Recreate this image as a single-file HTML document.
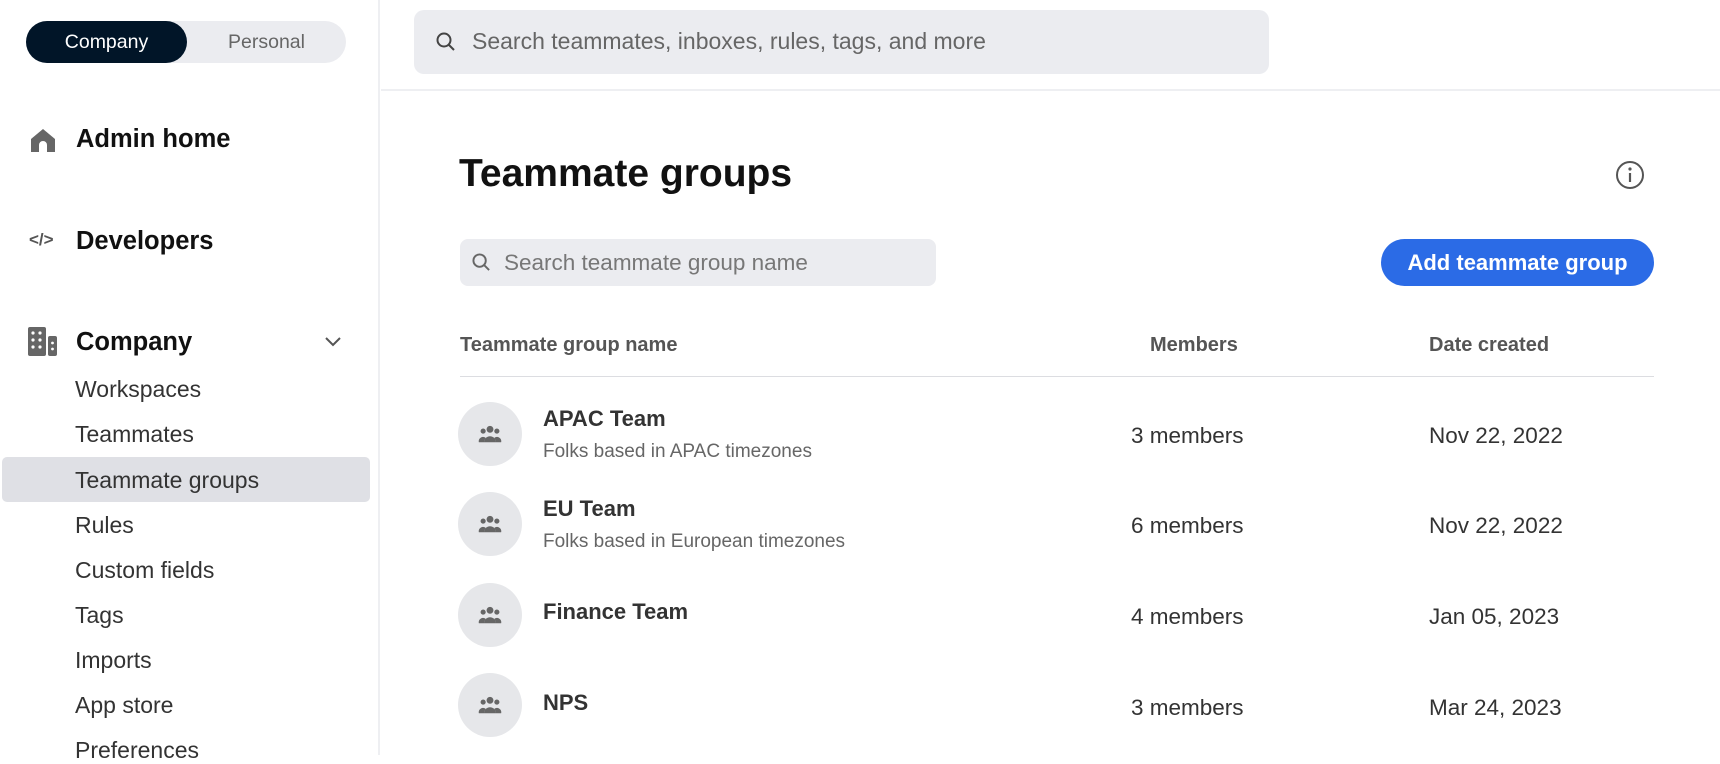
<!DOCTYPE html>
<html><head><meta charset="utf-8"><style>
*{box-sizing:border-box;margin:0;padding:0}
body{width:1720px;height:755px;overflow:hidden;background:#fff;font-family:"Liberation Sans",sans-serif;color:#1a1a1a;position:relative}
.a{position:absolute;white-space:nowrap}
.side{position:absolute;left:0;top:0;width:380px;height:755px;border-right:2px solid #eeeff2}
.tog{left:26px;top:21px;width:320px;height:42px;border-radius:21px;background:#ebecf0}
.tog .on{position:absolute;left:0;top:0;width:161px;height:42px;border-radius:21px;background:#011528;color:#fff;font-size:19.5px;text-align:center;line-height:42px}
.tog .off{position:absolute;left:161px;top:0;width:159px;height:42px;color:#666;font-size:19.5px;text-align:center;line-height:42px}
.h{font-size:25.5px;font-weight:bold;color:#111}
.sub{font-size:23px;color:#333;left:75px}
.muted{color:#666}
.av{position:absolute;left:458px;width:64px;height:64px;border-radius:50%;background:#e6e7ea;display:flex;align-items:center;justify-content:center}
.nm{font-size:22px;font-weight:bold;color:#333;left:543px}
.ds{font-size:19px;color:#666;left:543px}
.mb{font-size:22.5px;color:#333;left:1131px}
.dt{font-size:22.5px;color:#333;left:1429px}
</style></head><body>
<div class="side">
 <div class="a tog"><div class="on">Company</div><div class="off">Personal</div></div>
 <svg class="a" style="left:30px;top:128px" width="26" height="24" viewBox="0 0 26 24"><path d="M13 1 L25 11 V24 H17 V17 a4 4 0 0 0 -8 0 V24 H1 V11 Z" fill="#666"/></svg>
 <div class="a h" style="left:76px;top:125px">Admin home</div>
 <div class="a" style="left:29px;top:230px;font-size:17px;color:#555;font-weight:bold">&lt;/&gt;</div>
 <div class="a h" style="left:76px;top:227px">Developers</div>
 <svg class="a" style="left:28px;top:327px" width="30" height="30" viewBox="0 0 30 30"><rect x="0" y="0" width="18" height="29" rx="2" fill="#666"/><rect x="20" y="9" width="9" height="20" rx="2" fill="#666"/><g fill="#fff"><circle cx="5" cy="6" r="1.6"/><circle cx="12" cy="6" r="1.6"/><circle cx="5" cy="13" r="1.6"/><circle cx="12" cy="13" r="1.6"/><circle cx="5" cy="20" r="1.6"/><circle cx="12" cy="20" r="1.6"/><circle cx="24.5" cy="16" r="1.4"/><circle cx="24.5" cy="22" r="1.4"/></g></svg>
 <div class="a h" style="left:76px;top:328px">Company</div>
 <svg class="a" style="left:325px;top:337px" width="16" height="10" viewBox="0 0 16 10"><path d="M1 1 L8 8 L15 1" stroke="#555" stroke-width="2" fill="none"/></svg>
 <div class="a" style="left:2px;top:457px;width:368px;height:45px;background:#dfe0e5;border-radius:5px"></div>
 <div class="a sub" style="top:376px">Workspaces</div>
 <div class="a sub" style="top:421px">Teammates</div>
 <div class="a sub" style="top:467px">Teammate groups</div>
 <div class="a sub" style="top:512px">Rules</div>
 <div class="a sub" style="top:557px">Custom fields</div>
 <div class="a sub" style="top:602px">Tags</div>
 <div class="a sub" style="top:647px">Imports</div>
 <div class="a sub" style="top:692px">App store</div>
 <div class="a sub" style="top:737px">Preferences</div>
</div>
<div class="a" style="left:381px;top:89px;width:1339px;height:2px;background:#eeeff2"></div>
<div class="a" style="left:414px;top:10px;width:855px;height:64px;background:#ebecf0;border-radius:10px"></div>
<svg class="a" style="left:436px;top:32px" width="20" height="20" viewBox="0 0 20 20"><circle cx="8" cy="8" r="6.5" stroke="#444" stroke-width="2" fill="none"/><path d="M13 13 L18 18" stroke="#444" stroke-width="2"/></svg>
<div class="a muted" style="left:472px;top:28px;font-size:23px">Search teammates, inboxes, rules, tags, and more</div>
<div class="a" style="left:459px;top:152px;font-size:39px;font-weight:bold;color:#111">Teammate groups</div>
<svg class="a" style="left:1615px;top:160px" width="30" height="30" viewBox="0 0 30 30"><circle cx="15" cy="15" r="13" stroke="#555" stroke-width="2" fill="none"/><circle cx="15" cy="9" r="1.6" fill="#555"/><path d="M15 13 V22" stroke="#555" stroke-width="2.2"/></svg>
<div class="a" style="left:460px;top:239px;width:476px;height:47px;background:#ebecf0;border-radius:8px"></div>
<svg class="a" style="left:472px;top:253px" width="19" height="19" viewBox="0 0 20 20"><circle cx="8" cy="8" r="6.5" stroke="#666" stroke-width="2" fill="none"/><path d="M13 13 L18 18" stroke="#666" stroke-width="2"/></svg>
<div class="a" style="left:504px;top:250px;font-size:22.5px;color:#777">Search teammate group name</div>
<div class="a" style="left:1381px;top:239px;width:273px;height:47px;background:#2b6be6;border-radius:24px;color:#fff;font-size:22px;font-weight:bold;text-align:center;line-height:47px">Add teammate group</div>
<div class="a" style="left:460px;top:334px;font-size:20px;font-weight:bold;color:#555">Teammate group name</div>
<div class="a" style="left:1150px;top:334px;font-size:20px;font-weight:bold;color:#555">Members</div>
<div class="a" style="left:1429px;top:334px;font-size:20px;font-weight:bold;color:#555">Date created</div>
<div class="a" style="left:460px;top:376px;width:1194px;height:1px;background:#dcdde1"></div>

<div class="av" style="top:402px"><svg width="24" height="19" viewBox="0 0 28 22"><g fill="#666"><circle cx="14" cy="5" r="4"/><circle cx="6" cy="7" r="3"/><circle cx="22" cy="7" r="3"/><path d="M7 20 a7 7 0 0 1 14 0 Z"/><path d="M1 20 a5 5 0 0 1 8 -5 a8 8 0 0 0 -2 5 Z"/><path d="M27 20 a5 5 0 0 0 -8 -5 a8 8 0 0 1 2 5 Z"/></g></svg></div>
<div class="a nm" style="top:406px">APAC Team</div>
<div class="a ds" style="top:441px">Folks based in APAC timezones</div>
<div class="a mb" style="top:423px">3 members</div>
<div class="a dt" style="top:423px">Nov 22, 2022</div>

<div class="av" style="top:492px"><svg width="24" height="19" viewBox="0 0 28 22"><g fill="#666"><circle cx="14" cy="5" r="4"/><circle cx="6" cy="7" r="3"/><circle cx="22" cy="7" r="3"/><path d="M7 20 a7 7 0 0 1 14 0 Z"/><path d="M1 20 a5 5 0 0 1 8 -5 a8 8 0 0 0 -2 5 Z"/><path d="M27 20 a5 5 0 0 0 -8 -5 a8 8 0 0 1 2 5 Z"/></g></svg></div>
<div class="a nm" style="top:496px">EU Team</div>
<div class="a ds" style="top:531px">Folks based in European timezones</div>
<div class="a mb" style="top:513px">6 members</div>
<div class="a dt" style="top:513px">Nov 22, 2022</div>

<div class="av" style="top:583px"><svg width="24" height="19" viewBox="0 0 28 22"><g fill="#666"><circle cx="14" cy="5" r="4"/><circle cx="6" cy="7" r="3"/><circle cx="22" cy="7" r="3"/><path d="M7 20 a7 7 0 0 1 14 0 Z"/><path d="M1 20 a5 5 0 0 1 8 -5 a8 8 0 0 0 -2 5 Z"/><path d="M27 20 a5 5 0 0 0 -8 -5 a8 8 0 0 1 2 5 Z"/></g></svg></div>
<div class="a nm" style="top:599px">Finance Team</div>
<div class="a mb" style="top:604px">4 members</div>
<div class="a dt" style="top:604px">Jan 05, 2023</div>

<div class="av" style="top:673px"><svg width="24" height="19" viewBox="0 0 28 22"><g fill="#666"><circle cx="14" cy="5" r="4"/><circle cx="6" cy="7" r="3"/><circle cx="22" cy="7" r="3"/><path d="M7 20 a7 7 0 0 1 14 0 Z"/><path d="M1 20 a5 5 0 0 1 8 -5 a8 8 0 0 0 -2 5 Z"/><path d="M27 20 a5 5 0 0 0 -8 -5 a8 8 0 0 1 2 5 Z"/></g></svg></div>
<div class="a nm" style="top:690px">NPS</div>
<div class="a mb" style="top:695px">3 members</div>
<div class="a dt" style="top:695px">Mar 24, 2023</div>
</body></html>
